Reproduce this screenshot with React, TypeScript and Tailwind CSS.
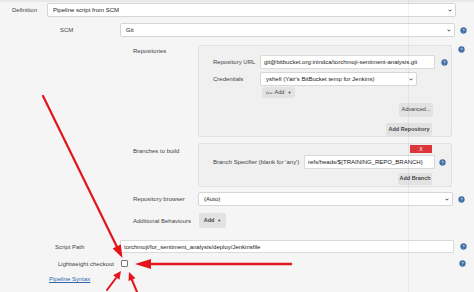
import React from "react";

const Help = ({ className = "" }: { className?: string }) => (
  <svg viewBox="0 0 8 8" className={`w-[7px] h-[7px] shrink-0 ${className}`}>
    <circle cx="4" cy="4" r="3.6" fill="#3f6fa6" />
    <path d="M3 3.1 C3 2.3 5.1 2.3 5.1 3.2 C5.1 3.9 4.1 3.9 4.1 4.7" stroke="#dfe8f2" strokeWidth="0.8" fill="none" />
    <circle cx="4.1" cy="5.8" r="0.45" fill="#dfe8f2" />
  </svg>
);

const Chevron = () => (
  <svg viewBox="0 0 6 4" className="w-[4px] h-[3px] shrink-0">
    <path d="M0.8 0.8 L3 3 L5.2 0.8" stroke="#222" strokeWidth="1.2" fill="none" />
  </svg>
);

const Select = ({ text, className }: { text: string; className: string }) => (
  <div
    className={`flex shrink-0 items-center justify-between bg-white border border-[#d6d6d6] rounded-[2px] pl-[5px] pr-[3px] text-[#222] ${className}`}
  >
    <span className="whitespace-nowrap">{text}</span>
    <Chevron />
  </div>
);

const Input = ({ text, className }: { text: string; className: string }) => (
  <div
    className={`flex shrink-0 items-center bg-white border border-[#dadada] rounded-[1px] px-[3px] text-[#222] overflow-hidden whitespace-nowrap ${className}`}
  >
    {text}
  </div>
);

const Button = ({ children, className }: { children: React.ReactNode; className: string }) => (
  <div
    className={`flex shrink-0 items-center justify-center bg-[#e2e2e2] rounded-[2px] text-[#444] text-[5.5px] whitespace-nowrap ${className}`}
  >
    {children}
  </div>
);

export default function App() {
  return (
    <div className="relative w-[474px] h-[292px] overflow-hidden bg-[#f5f5f5] text-[6px] leading-none text-[#444] font-['Liberation_Sans',Arial,sans-serif]">
      {/* top strip */}
      <div className="h-[2px] bg-[#e8e8e8]" />

      {/* Definition */}
      <div className="mt-[1px] flex items-center h-[14px]">
        <div className="w-[47px] shrink-0 pl-[12px]">Definition</div>
        <Select text="Pipeline script from SCM" className="w-[409px] h-[14px]" />
      </div>

      {/* SCM */}
      <div className="mt-[6px] flex items-center h-[14px]">
        <div className="w-[120px] shrink-0 pl-[60px]">SCM</div>
        <Select text="Git" className="w-[335px] h-[14px]" />
        <Help className="ml-[5px]" />
      </div>

      {/* Repositories */}
      <div className="mt-[8px] flex items-start">
        <div className="w-[198px] shrink-0 pl-[133px] pt-[3px]">Repositories</div>
        <div className="w-[254px] h-[92px] shrink-0 bg-[#f0f0f0] border border-[#e2e2e2] rounded-[2px] pt-[9px] pl-[14px] pr-[4px] flex flex-col">
          <div className="flex items-center h-[14px]">
            <div className="w-[47px] shrink-0 whitespace-nowrap">Repository URL</div>
            <Input text="git@bitbucket.org:inindca/torchmoji-sentiment-analysis.git" className="w-[175px] h-[14px]" />
            <Help className="ml-[6px]" />
          </div>
          <div className="mt-[3px] flex items-center h-[14px]">
            <div className="w-[47px] shrink-0">Credentials</div>
            <Select text="yshefi (Yair's BitBucket temp for Jenkins)" className="w-[157px] h-[14px]" />
          </div>
          <div className="mt-[1px] pl-[49px] flex">
            <Button className="w-[33px] h-[11px] gap-[2px]">
              <svg viewBox="0 0 10 5" className="w-[7px] h-[4px]">
                <circle cx="2" cy="2.5" r="1.5" fill="none" stroke="#777" strokeWidth="0.9" />
                <path d="M3.5 2.5 H9.5 M8 2.5 V4 M6.5 2.5 V3.8" stroke="#777" strokeWidth="0.9" />
              </svg>
              <span>Add</span>
              <span className="text-[4px] ml-[1px]">▼</span>
            </Button>
          </div>
          <div className="flex flex-col items-end pr-[14px]">
            <Button className="mt-[5px] w-[34px] h-[14px]">Advanced...</Button>
            <Button className="mt-[6px] w-[46px] h-[13px] mr-[1px] font-bold">Add Repository</Button>
          </div>
        </div>
        <Help className="ml-[6px] mt-[1px]" />
      </div>

      {/* Branches to build */}
      <div className="mt-[6px] flex items-start">
        <div className="w-[198px] shrink-0 pl-[133px] pt-[5px]">Branches to build</div>
        <div className="w-[254px] h-[44px] shrink-0 bg-[#f0f0f0] border border-[#e2e2e2] rounded-[2px] pt-[1px] pl-[14px] pr-[5px] flex flex-col">
          <div className="flex justify-end pr-[14px]">
            <div className="w-[22px] h-[8px] bg-[#dc363c] text-white text-[5px] flex items-center justify-center">X</div>
          </div>
          <div className="mt-[2px] flex items-center h-[14px]">
            <div className="w-[91px] shrink-0 whitespace-nowrap">Branch Specifier (blank for 'any')</div>
            <Input text="refs/heads/${TRAINING_REPO_BRANCH}" className="w-[131px] h-[14px]" />
            <Help className="ml-[4px]" />
          </div>
          <div className="mt-[4px] flex justify-end pr-[14px]">
            <Button className="w-[34px] h-[12px] font-bold">Add Branch</Button>
          </div>
        </div>
      </div>

      {/* Repository browser */}
      <div className="mt-[5px] flex items-center h-[14px]">
        <div className="w-[198px] shrink-0 pl-[133px]">Repository browser</div>
        <Select text="(Auto)" className="w-[255px] h-[14px]" />
        <Help className="ml-[5px]" />
      </div>

      {/* Additional Behaviours */}
      <div className="mt-[7px] flex items-center h-[15px]">
        <div className="w-[199px] shrink-0 pl-[133px]">Additional Behaviours</div>
        <Button className="w-[27px] h-[15px] gap-[3px]">
          <span className="font-bold">Add</span>
          <span className="text-[4px]">▼</span>
        </Button>
      </div>

      {/* Script Path */}
      <div className="mt-[12px] flex items-center h-[13px]">
        <div className="w-[120px] shrink-0 pl-[55px]">Script Path</div>
        <Input text="torchmoji/for_sentiment_analysis/deploy/Jenkinsfile" className="w-[334px] h-[13px]" />
        <Help className="ml-[6px]" />
      </div>

      {/* Lightweight checkout */}
      <div className="mt-[6px] flex items-center h-[9px]">
        <div className="w-[121px] shrink-0 pl-[58px]">Lightweight checkout</div>
        <div className="w-[7px] h-[7px] bg-white border border-[#777] rounded-[1px]" />
        <div className="ml-auto mr-[8px]">
          <Help />
        </div>
      </div>

      {/* Pipeline Syntax */}
      <div className="mt-[8px] pl-[49px]">
        <span className="text-[#2f66ad] underline">Pipeline Syntax</span>
      </div>

      {/* faint vertical seam */}
      <div className="absolute top-0 bottom-0 left-[408px] w-px bg-black/[0.05] pointer-events-none" />

      {/* red arrows */}
      <svg className="absolute inset-0 pointer-events-none" width="474" height="292" viewBox="0 0 474 292">
        <g stroke="#e3141b" fill="#e3141b" strokeLinecap="round">
          <line x1="43" y1="96" x2="117" y2="247" strokeWidth="2.2" />
          <polygon points="122.5,258 112.6,248.5 120.8,244.4" stroke="none" />
          <line x1="148" y1="264" x2="291" y2="264" strokeWidth="2.4" />
          <polygon points="135,264 151,259 151,269" stroke="none" />
          <line x1="107" y1="290" x2="116" y2="278" strokeWidth="2" />
          <polygon points="121,271 119.4,279.8 113.1,275.2" stroke="none" />
          <line x1="137" y1="292" x2="132" y2="280" strokeWidth="2" />
          <polygon points="129,272 135.5,278.3 128.5,281" stroke="none" />
        </g>
      </svg>
    </div>
  );
}
